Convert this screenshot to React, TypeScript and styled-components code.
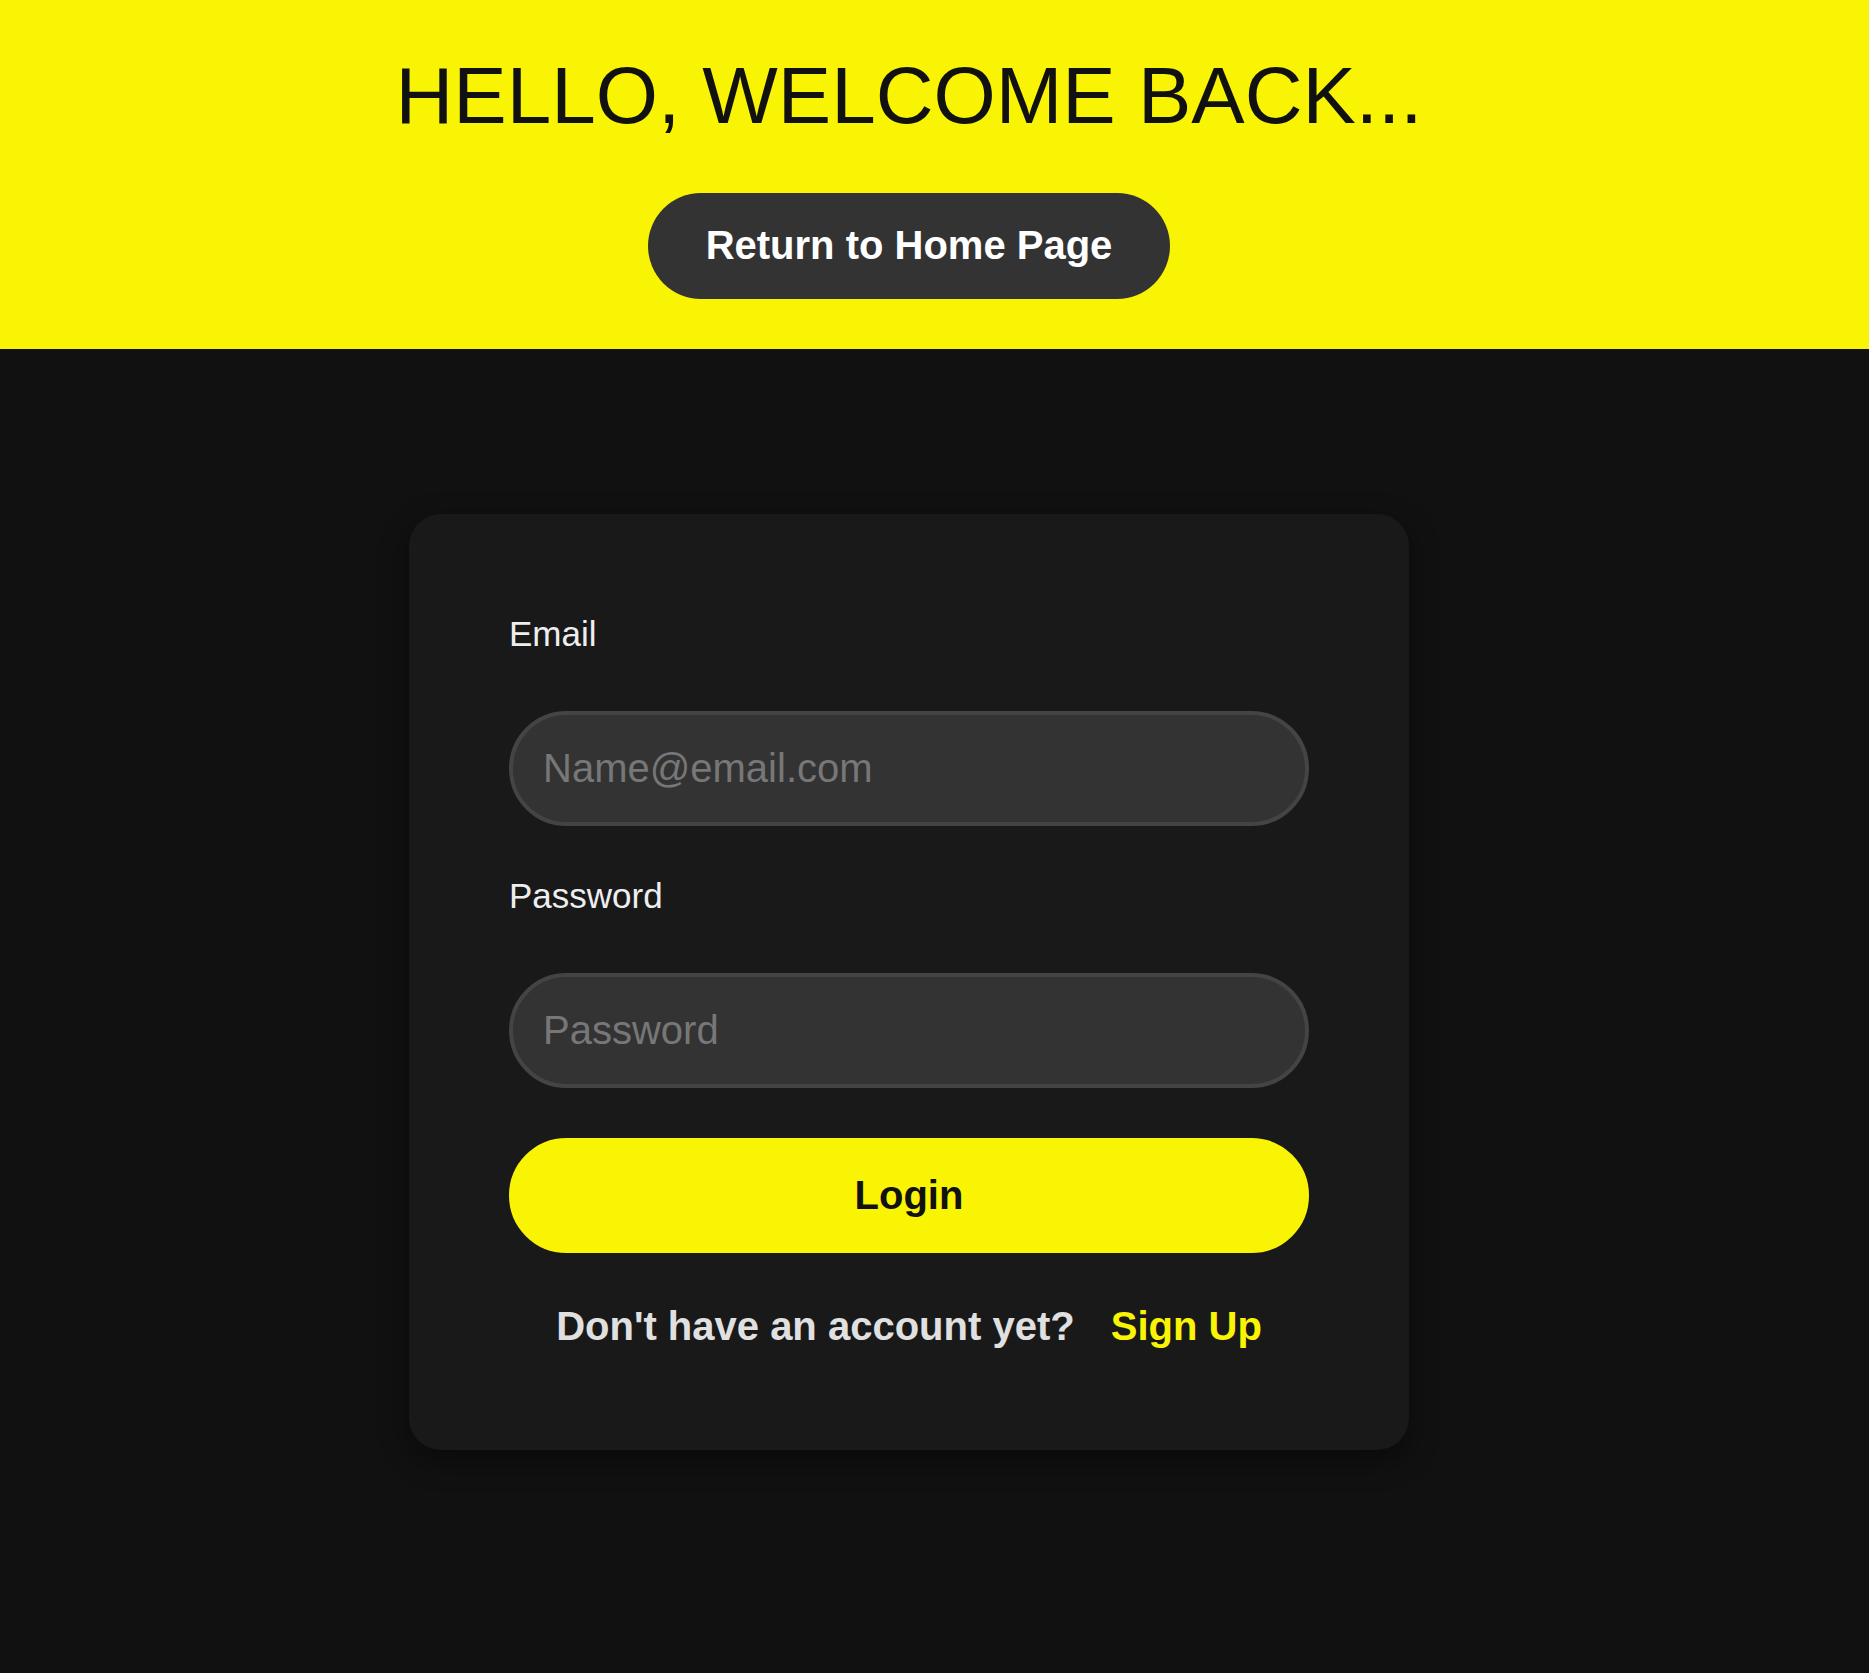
import React from "react";
import styled, { createGlobalStyle } from "styled-components";

const GlobalStyle = createGlobalStyle`
  * {
    box-sizing: border-box;
  }
  html, body {
    margin: 0;
    padding: 0;
    background: #111111;
    font-family: "Liberation Sans", Arial, sans-serif;
  }
`;

const Header = styled.header`
  background: #f9f304;
  display: flex;
  flex-direction: column;
  align-items: center;
  gap: 51px;
  padding: 50px 51px 50px 0;
`;

const Title = styled.h1`
  margin: 0;
  font-size: 80px;
  font-weight: 400;
  color: #111111;
  line-height: normal;
`;

const HomeButton = styled.button`
  font-family: inherit;
  font-size: 40px;
  font-weight: 700;
  color: #ffffff;
  background: #333333;
  border: none;
  border-radius: 999px;
  padding: 30px 58px 31px;
  line-height: normal;
  cursor: pointer;
`;

const Main = styled.main`
  display: flex;
  justify-content: center;
  padding: 165px 51px 225px 0;
`;

const Card = styled.div`
  width: 1000px;
  background: #191919;
  border-radius: 32px;
  padding: 100px 100px 100px;
  box-shadow: 0 10px 30px rgba(0, 0, 0, 0.45);
`;

const Form = styled.form`
  display: flex;
  flex-direction: column;
  gap: 50px;
`;

const Field = styled.div`
  display: flex;
  flex-direction: column;
  gap: 57px;
`;

const Label = styled.label`
  font-size: 35px;
  color: #eeeeee;
  line-height: normal;
`;

const Input = styled.input`
  width: 100%;
  font-family: inherit;
  font-size: 40px;
  line-height: normal;
  color: #eeeeee;
  background: #333333;
  border: 4px solid #444444;
  border-radius: 999px;
  padding: 31px 30px;
  outline: none;

  &::placeholder {
    color: #777777;
  }
`;

const LoginButton = styled.button`
  width: 100%;
  font-family: inherit;
  font-size: 40px;
  font-weight: 700;
  line-height: normal;
  color: #111111;
  background: #f9f304;
  border: 4px solid #f9f304;
  border-radius: 999px;
  padding: 31px;
  cursor: pointer;
`;

const Footer = styled.p`
  margin: 1px 0 1px;
  text-align: center;
  font-size: 40px;
  font-weight: 700;
  line-height: normal;
  color: #e0e0e0;
`;

const SignUp = styled.a`
  color: #f9f304;
  text-decoration: none;
  margin-left: 25px;
  cursor: pointer;
`;

const App = () => {
  return (
    <>
      <GlobalStyle />
      <Header>
        <Title>HELLO, WELCOME BACK...</Title>
        <HomeButton type="button">Return to Home Page</HomeButton>
      </Header>
      <Main>
        <Card>
          <Form onSubmit={(e) => e.preventDefault()}>
            <Field>
              <Label htmlFor="email">Email</Label>
              <Input id="email" type="email" placeholder="Name@email.com" />
            </Field>
            <Field>
              <Label htmlFor="password">Password</Label>
              <Input id="password" type="password" placeholder="Password" />
            </Field>
            <LoginButton type="submit">Login</LoginButton>
            <Footer>
              Don't have an account yet? <SignUp>Sign Up</SignUp>
            </Footer>
          </Form>
        </Card>
      </Main>
    </>
  );
};

export default App;
